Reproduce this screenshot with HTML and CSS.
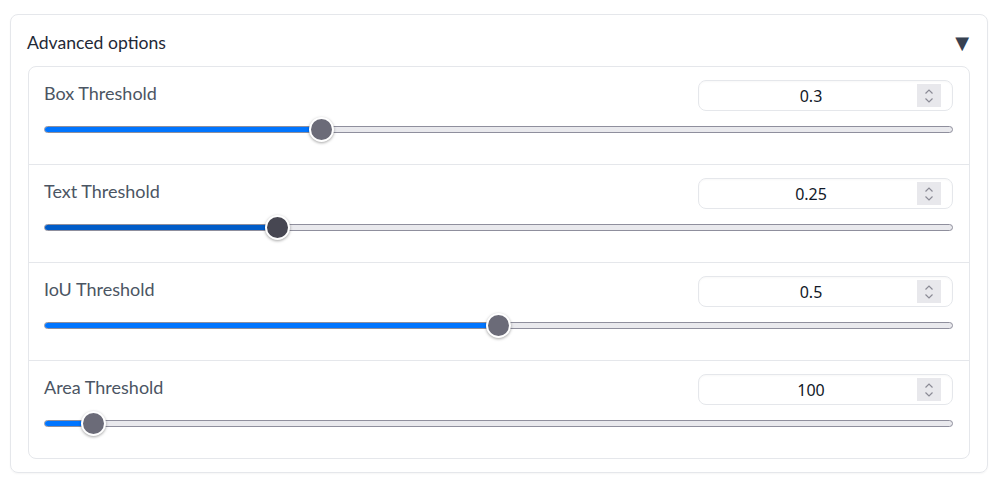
FILE: index.html
```html
<!DOCTYPE html>
<html>
<head>
<meta charset="utf-8">
<link rel="stylesheet" href="styles.css">
</head>
<body>
<div class="panel">
  <div class="panel-head">
    <span class="panel-title">Advanced options</span>
    <span class="caret">▼</span>
  </div>
  <div class="group">
    <div class="row">
      <div class="row-top">
        <span class="label">Box Threshold</span>
        <div class="num"><span class="num-val">0.3</span><span class="spin"><svg width="10" height="16" viewBox="0 0 10 16"><path d="M1.5 5.5 L5 2 L8.5 5.5 M1.5 10.5 L5 14 L8.5 10.5" fill="none" stroke="#8b8b96" stroke-width="1.2"/></svg></span></div>
      </div>
      <div class="slider"><div class="track"><div class="fill" style="width:30%"></div></div><div class="thumb" style="left:calc(12px + (100% - 24px) * 0.3)"></div></div>
    </div>
    <div class="row">
      <div class="row-top">
        <span class="label">Text Threshold</span>
        <div class="num"><span class="num-val">0.25</span><span class="spin"><svg width="10" height="16" viewBox="0 0 10 16"><path d="M1.5 5.5 L5 2 L8.5 5.5 M1.5 10.5 L5 14 L8.5 10.5" fill="none" stroke="#8b8b96" stroke-width="1.2"/></svg></span></div>
      </div>
      <div class="slider active"><div class="track"><div class="fill" style="width:25%"></div></div><div class="thumb" style="left:calc(12px + (100% - 24px) * 0.25)"></div></div>
    </div>
    <div class="row">
      <div class="row-top">
        <span class="label">IoU Threshold</span>
        <div class="num"><span class="num-val">0.5</span><span class="spin"><svg width="10" height="16" viewBox="0 0 10 16"><path d="M1.5 5.5 L5 2 L8.5 5.5 M1.5 10.5 L5 14 L8.5 10.5" fill="none" stroke="#8b8b96" stroke-width="1.2"/></svg></span></div>
      </div>
      <div class="slider"><div class="track"><div class="fill" style="width:50%"></div></div><div class="thumb" style="left:calc(12px + (100% - 24px) * 0.5)"></div></div>
    </div>
    <div class="row">
      <div class="row-top">
        <span class="label">Area Threshold</span>
        <div class="num"><span class="num-val">100</span><span class="spin"><svg width="10" height="16" viewBox="0 0 10 16"><path d="M1.5 5.5 L5 2 L8.5 5.5 M1.5 10.5 L5 14 L8.5 10.5" fill="none" stroke="#8b8b96" stroke-width="1.2"/></svg></span></div>
      </div>
      <div class="slider"><div class="track"><div class="fill" style="width:4.2%"></div></div><div class="thumb" style="left:calc(12px + (100% - 24px) * 0.042)"></div></div>
    </div>
  </div>
</div>
</body>
</html>
```

FILE: styles.css
```css
* { box-sizing: border-box; }
html, body { margin: 0; padding: 0; background: #fff; }
body {
  font-family: "Source Sans Pro", Lato, "Noto Sans", sans-serif;
  width: 1000px;
  height: 486px;
  padding: 14px 12px 0 10px;
}
.panel {
  border: 1px solid #e5e7eb;
  border-radius: 8px;
  padding: 0 17px 13px 17px;
  box-shadow: 0 1px 2px rgba(0,0,0,0.04);
}
.panel-head {
  display: flex;
  justify-content: space-between;
  align-items: center;
  height: 51px;
  padding-top: 3px;
}
.panel-title {
  font-size: 17.6px;
  color: #1f2937;
  margin-left: -1px;
}
.caret {
  font-size: 18px;
  color: #374151;
  margin-right: 1px;
  font-family: "DejaVu Sans", sans-serif;
}
.group {
  border: 1px solid #e5e7eb;
  border-radius: 8px;
  overflow: hidden;
}
.row {
  height: 98px;
  padding: 13px 17px 0 15px;
  border-top: 1px solid #e5e7eb;
}
.row:first-child { border-top: none; height: 97px; }
.row-top {
  display: flex;
  justify-content: space-between;
  align-items: flex-start;
}
.label {
  font-size: 18px;
  color: #4b5563;
  margin-top: 2px;
}
.num {
  width: 255px;
  height: 31px;
  border: 1px solid #e5e7eb;
  border-radius: 8px;
  display: flex;
  align-items: center;
  padding: 0 11px 0 8px;
  box-shadow: inset 0 1px 2px rgba(0,0,0,0.03);
  margin-right: -1px;
}
.num-val {
  flex: 1;
  text-align: center;
  font-family: "Noto Sans", sans-serif;
  font-size: 16px;
  color: #111827;
  padding-right: 2px;
}
.spin {
  width: 24px;
  height: 23px;
  background: #e8e8ec;
  display: flex;
  align-items: center;
  justify-content: center;
}
.slider {
  position: relative;
  height: 24px;
  margin-top: 6px;
  margin-right: -1px;
}
.track {
  position: absolute;
  left: 0; right: 0;
  top: 9px;
  height: 7px;
  border-radius: 4px;
  background: #e9e9ed;
  border: 1px solid #8f8f9d;
  overflow: hidden;
}
.fill {
  background: #0075ff;
  margin: -1px 0 0 -1px;
  height: 7px;
}
.thumb {
  position: absolute;
  top: 0;
  width: 25px;
  height: 25px;
  margin-left: -12.5px;
  border-radius: 50%;
  background: #6b6b78;
  border: 2px solid #fff;
  box-shadow: 0 1px 3px rgba(0,0,0,0.35);
}
.slider.active .fill { background: #005cc8; }
.slider.active .thumb { background: #474752; }
```
